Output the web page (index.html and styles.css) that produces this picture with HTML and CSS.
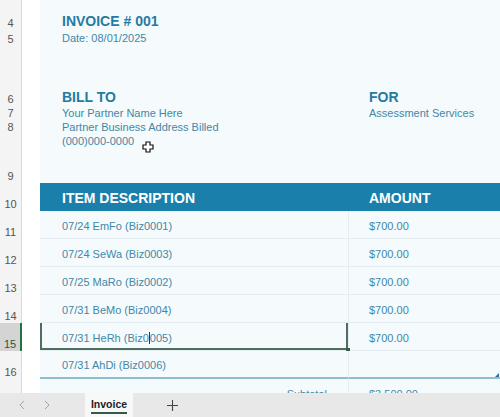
FILE: index.html
```html
<!DOCTYPE html>
<html>
<head>
<meta charset="utf-8">
<link rel="stylesheet" href="styles.css">
</head>
<body>
<div class="sheet">
  <div class="row h-top"><div class="rh"></div><div class="ca"></div><div class="cb"></div><div class="cc"></div></div>
  <div class="row h-title"><div class="rh">4</div><div class="ca"></div><div class="cb title">INVOICE # 001</div><div class="cc"></div></div>
  <div class="row h-date"><div class="rh">5</div><div class="ca"></div><div class="cb text">Date: 08/01/2025</div><div class="cc"></div></div>
  <div class="row h-bill"><div class="rh">6</div><div class="ca"></div><div class="cb title">BILL TO</div><div class="cc title">FOR</div></div>
  <div class="row h-line"><div class="rh">7</div><div class="ca"></div><div class="cb text">Your Partner Name Here</div><div class="cc text">Assessment Services</div></div>
  <div class="row h-line"><div class="rh">8</div><div class="ca"></div><div class="cb text">Partner Business Address Billed</div><div class="cc"></div></div>
  <div class="row h-gap"><div class="rh">9</div><div class="ca"></div><div class="cb text top">(000)000-0000</div><div class="cc"></div></div>
  <div class="row h-item"><div class="rh">10</div><div class="ca"></div><div class="cb th">ITEM DESCRIPTION</div><div class="cc th">AMOUNT</div></div>
  <div class="row h-item"><div class="rh">11</div><div class="ca"></div><div class="cb td">07/24 EmFo (Biz0001)</div><div class="cc td">$700.00</div></div>
  <div class="row h-item"><div class="rh">12</div><div class="ca"></div><div class="cb td">07/24 SeWa (Biz0003)</div><div class="cc td">$700.00</div></div>
  <div class="row h-item"><div class="rh">13</div><div class="ca"></div><div class="cb td">07/25 MaRo (Biz0002)</div><div class="cc td">$700.00</div></div>
  <div class="row h-item"><div class="rh">14</div><div class="ca"></div><div class="cb td">07/31 BeMo (Biz0004)</div><div class="cc td">$700.00</div></div>
  <div class="row h-item"><div class="rh sel">15</div><div class="ca"></div><div class="cb td sel">07/31 HeRh (Biz0<span class="caret"></span>005)</div><div class="cc td">$700.00</div></div>
  <div class="row h-item"><div class="rh">16</div><div class="ca"></div><div class="cb td last">07/31 AhDi (Biz0006)</div><div class="cc td last"><span class="resize"></span></div></div>
  <div class="row h-item"><div class="rh">17</div><div class="ca"></div><div class="cb td sub">Subtotal</div><div class="cc td sub">$3,500.00</div></div>
  <svg class="pointer" width="12" height="12" viewBox="0 0 12 12"><path d="M4 1h4v3h3v4H8v3H4V8H1V4h3z" fill="#fff" stroke="#111" stroke-width="1.2"/></svg>
</div>
<div class="tabs">
  <svg class="nav first" width="6" height="10" viewBox="0 0 6 10"><path d="M5 1L1 5l4 4" fill="none" stroke="#a3a3a3" stroke-width="1"/></svg>
  <svg class="nav second" width="6" height="10" viewBox="0 0 6 10"><path d="M1 1l4 4-4 4" fill="none" stroke="#a3a3a3" stroke-width="1"/></svg>
  <div class="tab"><span class="tab-label">Invoice</span></div>
  <svg class="plus" width="11" height="11" viewBox="0 0 11 11"><path d="M5.5 0v11M0 5.5h11" stroke="#444" stroke-width="1.1"/></svg>
</div>
</body>
</html>
```

FILE: styles.css
```css
* { box-sizing: border-box; margin: 0; padding: 0; }
body {
  margin: 0;
  width: 500px;
  height: 417px;
  overflow: hidden;
  font-family: "Liberation Sans", Arial, sans-serif;
  background: #f5fafc;
}
.sheet {
  height: 393px;
  overflow: hidden;
  position: relative;
}
.row {
  display: grid;
  grid-template-columns: 22px 18px 308px 152px;
}
.h-top { height: 13px; }
.h-title { height: 17px; }
.h-date { height: 16px; }
.h-bill { height: 60px; }
.h-line { height: 14px; }
.h-gap { height: 49px; }
.h-item { height: 28px; }

.rh {
  background: #f4f4f4;
  border-right: 1px solid #dadada;
  font-size: 11px;
  line-height: 13px;
  color: #555;
  display: flex;
  align-items: flex-end;
  justify-content: center;
}
.rh.sel {
  background: #d4d4d4;
  border-right: 2px solid #217346;
  color: #1f5a3a;
}
.ca { background: #fff; }
.cb, .cc {
  background: #f5fafc;
  display: flex;
  align-items: flex-end;
  white-space: nowrap;
}
.cb { padding-left: 22px; }
.cc { padding-left: 21px; }

.title {
  font-size: 14px;
  font-weight: bold;
  line-height: 17px;
  color: #257aa3;
}
.text {
  font-size: 11px;
  line-height: 14px;
  color: #3f88a8;
}
.h-date .text { line-height: 16px; }
.text.top { align-items: flex-start; }

.th {
  background: #1b7fab;
  color: #fff;
  font-size: 14px;
  font-weight: bold;
  align-items: center;
  padding-top: 2px;
}
.td {
  font-size: 11px;
  color: #3f88a8;
  align-items: center;
  padding-top: 2px;
  border-bottom: 1px solid #e4edf1;
}
.cc.td { border-left: 1px solid #e4edf1; padding-left: 20px; }
.td.last { border-bottom: 2px solid #8dbfce; position: relative; }
.td.sub { border-bottom: none; }
.cb.sub { justify-content: flex-end; padding-right: 21px; }
.cb.sel {
  position: relative;
  box-shadow: inset 2px 0 0 #4f6f5c, inset -2px 0 0 #4f6f5c, inset 0 -2px 0 #4f6f5c;
}
.cb.sel::after {
  content: "";
  position: absolute;
  right: -2px;
  bottom: -2px;
  width: 4px;
  height: 4px;
  background: #3c5a48;
}
.caret {
  display: inline-block;
  width: 1px;
  height: 12px;
  background: #333;
  vertical-align: -2px;
}
.resize {
  position: absolute;
  right: 1px;
  bottom: 0;
  width: 0;
  height: 0;
  border-left: 4px solid transparent;
  border-bottom: 4px solid #2a6fa0;
}
.pointer {
  position: absolute;
  left: 142px;
  top: 141px;
}

.tabs {
  height: 24px;
  background: #e8e8e8;
  display: flex;
  align-items: center;
}
.nav.first { margin-left: 19px; }
.nav.second { margin-left: 19px; }
.tab {
  margin-left: 35px;
  width: 48px;
  height: 24px;
  background: #f8f8f8;
  display: flex;
  align-items: center;
  justify-content: center;
}
.tab-label {
  font-size: 10.5px;
  font-weight: bold;
  color: #222;
  line-height: 12px;
  padding-bottom: 2px;
  padding-top: 2px;
  border-bottom: 2px solid #35584a;
}
.plus { margin-left: 34px; }
```
